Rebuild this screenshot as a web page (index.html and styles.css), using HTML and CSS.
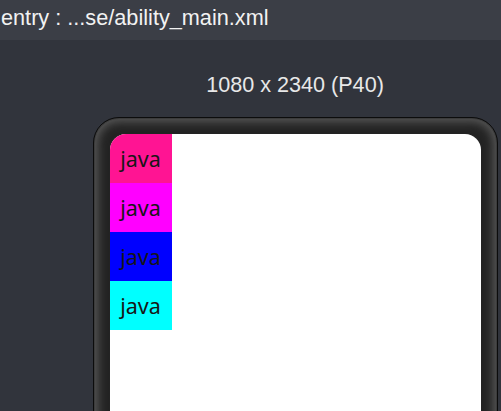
FILE: index.html
```html
<!DOCTYPE html>
<html>
<head>
<meta charset="utf-8">
<link rel="stylesheet" href="styles.css">
</head>
<body>
<div class="topbar">entry : ...se/ability_main.xml</div>
<div class="stage">
  <div class="label">1080 x 2340 (P40)</div>
  <div class="phone">
    <div class="screen">
      <div class="block pink">java</div>
      <div class="block magenta">java</div>
      <div class="block blue">java</div>
      <div class="block cyan">java</div>
    </div>
  </div>
</div>
</body>
</html>
```
FILE: styles.css
```css
html, body {
  margin: 0;
  padding: 0;
  height: 100%;
  overflow: hidden;
  background: #31343c;
}
.topbar {
  height: 40px;
  box-sizing: border-box;
  padding: 6px 0 0 1px;
  background: #3b3e46;
  color: #f2f2f2;
  font-family: "Liberation Sans", Arial, sans-serif;
  font-size: 21.7px;
  line-height: 24px;
  white-space: nowrap;
}
.stage {
  width: 590px;
  display: flex;
  flex-direction: column;
  align-items: center;
}
.label {
  margin-top: 33px;
  color: #e8e8e8;
  font-family: "Liberation Sans", Arial, sans-serif;
  font-size: 21.6px;
  line-height: 24px;
  white-space: nowrap;
}
.phone {
  margin-top: 20px;
  width: 405px;
  height: 400px;
  box-sizing: border-box;
  border: 1px solid #0c0c0c;
  border-radius: 26px;
  padding: 16px;
  background: #232323;
  box-shadow: inset 0 0 0 1px #3c3c3c, inset 0 0 10px 4px #575757;
}
.screen {
  height: 400px;
  background: #ffffff;
  border-radius: 16px;
  overflow: hidden;
}
.block {
  width: 62px;
  height: 49px;
  display: flex;
  align-items: center;
  justify-content: center;
  font-family: "Noto Sans", sans-serif;
  font-size: 21.5px;
  color: #161616;
}
.pink { background: #ff1493; }
.magenta { background: #ff00ff; }
.blue { background: #0000ff; }
.cyan { background: #00ffff; }
```
